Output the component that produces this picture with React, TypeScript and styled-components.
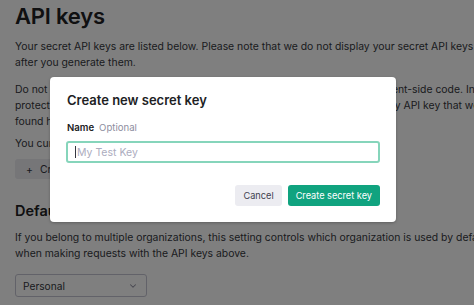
import React from "react";
import styled, { createGlobalStyle } from "styled-components";

const GlobalStyle = createGlobalStyle`
  html, body {
    margin: 0;
    padding: 0;
    width: 474px;
    height: 305px;
    overflow: hidden;
    background: #ffffff;
  }
  body {
    font-family: Inter, "Liberation Sans", sans-serif;
    color: #353740;
  }
`;

const Page = styled.div`
  position: relative;
  width: 474px;
  height: 305px;
  overflow: hidden;
`;

const Content = styled.div`
  width: 600px;
  padding: 2px 0 0 15px;
`;

const Title = styled.h1`
  margin: 0;
  font-size: 22px;
  line-height: 28px;
  font-weight: 600;
  color: #202123;
  letter-spacing: -0.2px;
`;

const Text = styled.p<{ $gap: number }>`
  margin: ${(p) => p.$gap}px 0 0;
  font-size: 10.4px;
  line-height: 16px;
  white-space: nowrap;
`;

const GhostButton = styled.button`
  display: flex;
  align-items: center;
  gap: 7px;
  margin-top: 7px;
  height: 20px;
  padding: 0 10px 0 11px;
  border: none;
  border-radius: 3px;
  background: #ececf1;
  color: #353740;
  font-family: inherit;
  font-size: 10.4px;
`;

const SubTitle = styled.h2`
  margin: 22px 0 0;
  font-size: 14.5px;
  line-height: 20px;
  font-weight: 600;
  color: #202123;
`;

const Select = styled.div`
  display: flex;
  align-items: center;
  justify-content: space-between;
  box-sizing: border-box;
  margin-top: 12px;
  width: 132px;
  height: 23px;
  padding: 0 8px 0 7px;
  border: 1px solid #c5c5d2;
  border-radius: 3px;
  font-size: 10.2px;
  color: #353740;
`;

const Overlay = styled.div`
  position: absolute;
  inset: 0;
  background: rgba(0, 0, 0, 0.5);
`;

const Modal = styled.div`
  position: absolute;
  left: 50px;
  top: 77px;
  width: 346px;
  box-sizing: border-box;
  padding: 13px 16px 16px 17px;
  background: #ffffff;
  border-radius: 4px;
  box-shadow: 0 1px 3px rgba(0, 0, 0, 0.25);
`;

const ModalTitle = styled.div`
  font-size: 13px;
  line-height: 20px;
  font-weight: 600;
  color: #202123;
`;

const Label = styled.div`
  display: flex;
  gap: 5px;
  margin-top: 11px;
  font-size: 9.6px;
  line-height: 14px;
`;

const LabelName = styled.span`
  font-weight: 600;
  color: #202123;
`;

const LabelHint = styled.span`
  color: #8e8ea0;
`;

const Input = styled.div`
  display: flex;
  align-items: center;
  box-sizing: border-box;
  margin: 6px 0 0 -1px;
  height: 22px;
  padding-left: 7px;
  border: 2px solid #86d5bb;
  border-radius: 3px;
  font-size: 10.5px;
  color: #acacbe;
`;

const Caret = styled.span`
  width: 1px;
  height: 12px;
  margin-right: 1px;
  background: #353740;
`;

const Actions = styled.div`
  display: flex;
  justify-content: flex-end;
  gap: 6px;
  margin-top: 22px;
`;

const Button = styled.button<{ $primary?: boolean }>`
  height: 21px;
  padding: 0 8px;
  border: none;
  border-radius: 3px;
  font-family: inherit;
  font-size: 9.2px;
  background: ${(p) => (p.$primary ? "#10a37f" : "#ececf1")};
  color: ${(p) => (p.$primary ? "#ffffff" : "#40414f")};
`;

const Chevron = () => (
  <svg width="10" height="10" viewBox="0 0 24 24" fill="none" stroke="#8e8ea0" strokeWidth="2.5" strokeLinecap="round" strokeLinejoin="round">
    <path d="M6 9l6 6 6-6" />
  </svg>
);

const App = () => {
  return (
    <Page>
      <GlobalStyle />
      <Content>
        <Title>API keys</Title>
        <Text $gap={9}>
          Your secret API keys are listed below. Please note that we do not display your secret API keys again
          <br />
          after you generate them.
        </Text>
        <Text $gap={11}>
          Do not share your API key with others, or expose it in the browser or other client-side code. In order to
          <br />
          protect the security of your account, OpenAI may also automatically rotate any API key that we've
          <br />
          found has leaked publicly.
        </Text>
        <Text $gap={6}>You currently do not have any API keys. Please create one below.</Text>
        <GhostButton>
          <span>+</span>
          <span>Create new secret key</span>
        </GhostButton>
        <SubTitle>Default organization</SubTitle>
        <Text $gap={9}>
          If you belong to multiple organizations, this setting controls which organization is used by default
          <br />
          when making requests with the API keys above.
        </Text>
        <Select>
          <span>Personal</span>
          <Chevron />
        </Select>
      </Content>
      <Overlay />
      <Modal>
        <ModalTitle>Create new secret key</ModalTitle>
        <Label>
          <LabelName>Name</LabelName>
          <LabelHint>Optional</LabelHint>
        </Label>
        <Input>
          <Caret />
          My Test Key
        </Input>
        <Actions>
          <Button>Cancel</Button>
          <Button $primary>Create secret key</Button>
        </Actions>
      </Modal>
    </Page>
  );
};

export default App;
